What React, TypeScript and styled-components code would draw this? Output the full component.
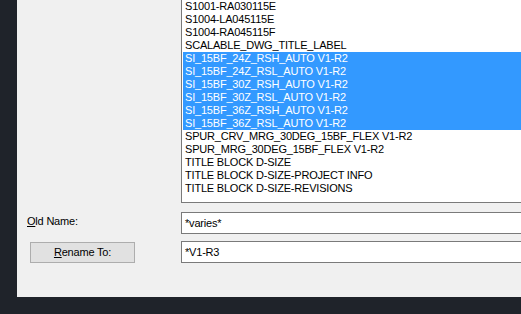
import styled, { createGlobalStyle } from "styled-components";

const GlobalStyle = createGlobalStyle`
  html, body {
    margin: 0;
    padding: 0;
    background: #1f232a;
    overflow: hidden;
  }
  body {
    font-family: "Liberation Sans", Arial, sans-serif;
    font-size: 11px;
    letter-spacing: -0.2px;
    color: #000;
  }
`;

const Screen = styled.div`
  width: 521px;
  height: 314px;
  display: flex;
  align-items: flex-start;
  padding-left: 17px;
  box-sizing: border-box;
  overflow: hidden;
`;

const Dialog = styled.div`
  flex: none;
  width: 560px;
  height: 297px;
  background: #f0f0f0;
  display: grid;
  grid-template-columns: 164px 1fr;
  grid-template-rows: 203px 31px 29px;
  align-content: start;
`;

const ListBox = styled.ul`
  grid-column: 2;
  margin: 0;
  padding: 0 0 0 1px;
  list-style: none;
  background: #fff;
  border: 1px solid #7a7a7a;
  border-top: none;
  overflow: hidden;
`;

const Item = styled.li<{ $selected?: boolean }>`
  height: 13px;
  line-height: 13px;
  padding-left: 2px;
  white-space: nowrap;
  background: ${(p) => (p.$selected ? "#3399ff" : "transparent")};
  color: ${(p) => (p.$selected ? "#fff" : "#000")};
`;

const Label = styled.div`
  align-self: end;
  height: 22px;
  display: flex;
  align-items: center;
  padding: 0 0 5px 10px;
  box-sizing: border-box;
`;

const ButtonCell = styled.div`
  align-self: end;
  height: 22px;
  display: flex;
  align-items: center;
  padding-left: 13px;
`;

const Button = styled.button`
  width: 105px;
  height: 21px;
  background: #e1e1e1;
  border: 1px solid #adadad;
  font: inherit;
  letter-spacing: inherit;
  color: #000;
  padding: 0;
`;

const TextBox = styled.div`
  align-self: end;
  height: 22px;
  background: #fff;
  border: 1px solid #7a7a7a;
  display: flex;
  align-items: center;
  padding-left: 3px;
  box-sizing: border-box;
`;

const items: [string, boolean][] = [
  ["S1001-RA030115E", false],
  ["S1004-LA045115E", false],
  ["S1004-RA045115F", false],
  ["SCALABLE_DWG_TITLE_LABEL", false],
  ["SI_15BF_24Z_RSH_AUTO V1-R2", true],
  ["SI_15BF_24Z_RSL_AUTO V1-R2", true],
  ["SI_15BF_30Z_RSH_AUTO V1-R2", true],
  ["SI_15BF_30Z_RSL_AUTO V1-R2", true],
  ["SI_15BF_36Z_RSH_AUTO V1-R2", true],
  ["SI_15BF_36Z_RSL_AUTO V1-R2", true],
  ["SPUR_CRV_MRG_30DEG_15BF_FLEX V1-R2", false],
  ["SPUR_MRG_30DEG_15BF_FLEX V1-R2", false],
  ["TITLE BLOCK D-SIZE", false],
  ["TITLE BLOCK D-SIZE-PROJECT INFO", false],
  ["TITLE BLOCK D-SIZE-REVISIONS", false],
];

export default function App() {
  return (
    <>
      <GlobalStyle />
      <Screen>
        <Dialog>
          <ListBox>
            {items.map(([name, sel]) => (
              <Item key={name} $selected={sel}>
                {name}
              </Item>
            ))}
          </ListBox>
          <Label>
            <span>
              <u>O</u>ld Name:
            </span>
          </Label>
          <TextBox>*varies*</TextBox>
          <ButtonCell>
            <Button>
              <u>R</u>ename To:
            </Button>
          </ButtonCell>
          <TextBox>*V1-R3</TextBox>
        </Dialog>
      </Screen>
    </>
  );
}
